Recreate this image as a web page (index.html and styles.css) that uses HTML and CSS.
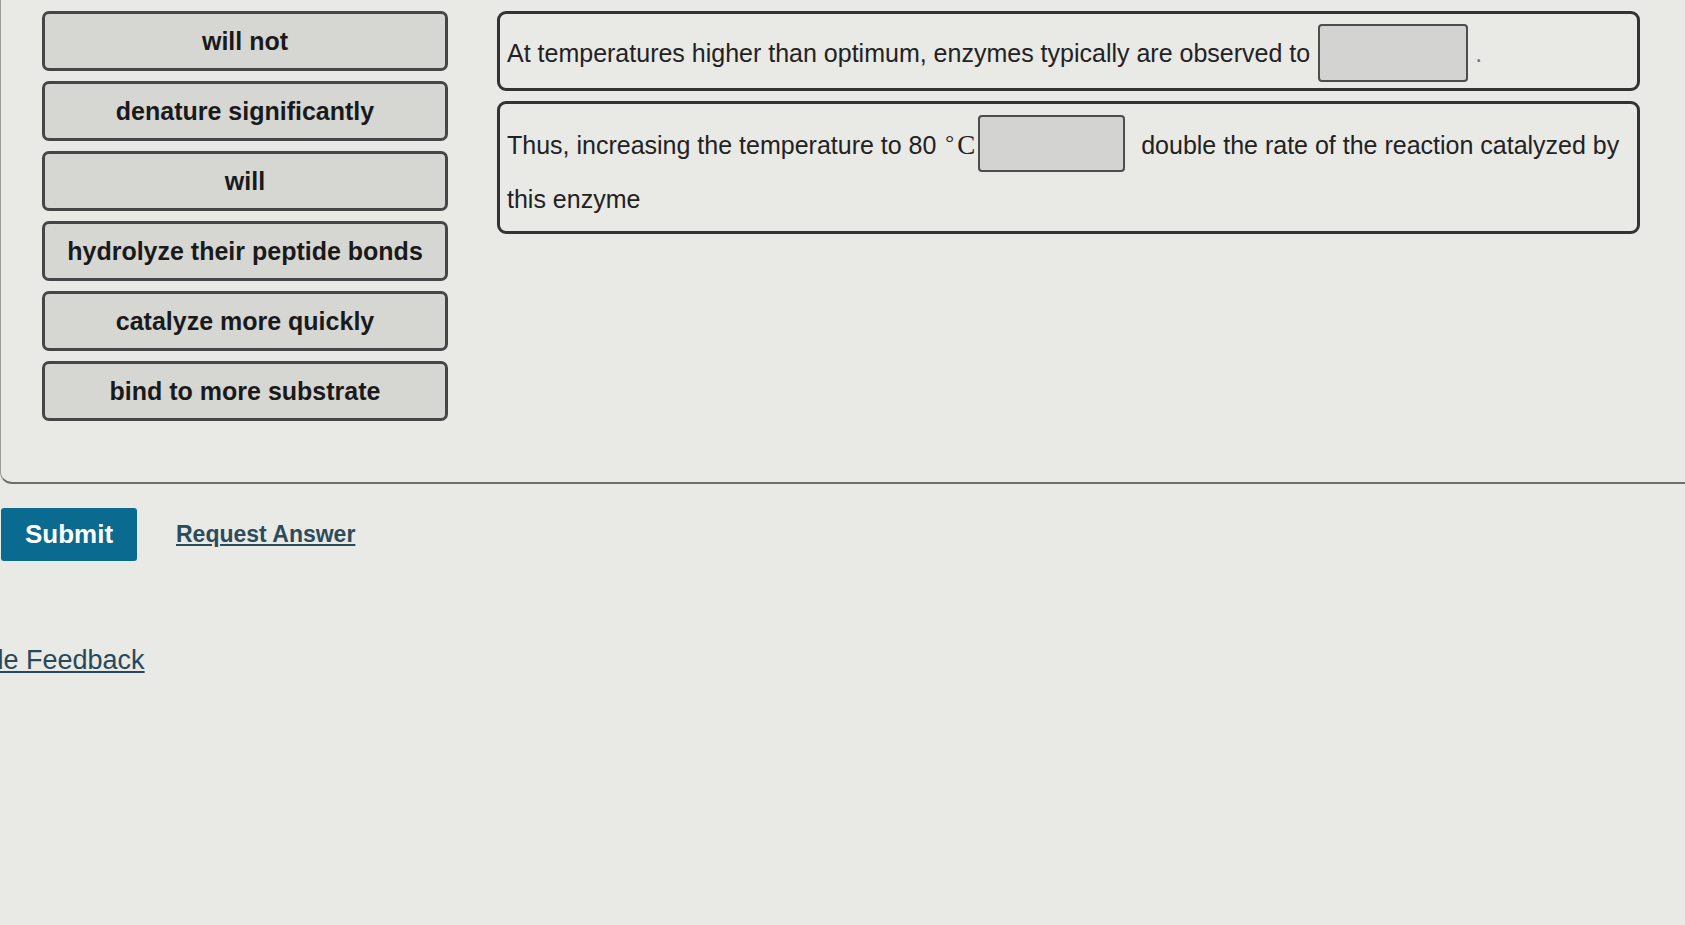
FILE: index.html
```html
<!DOCTYPE html>
<html lang="en">
<head>
    <meta charset="UTF-8">
    <meta name="viewport" content="width=device-width, initial-scale=1.0">
    <title>Enzymes and temperature</title>
    <link rel="stylesheet" href="styles.css">
</head>
<body>
    <div class="question">
        <!-- Answer chips to drag into the blanks -->
        <div class="chips">
            <div class="chip">will not</div>
            <div class="chip">denature significantly</div>
            <div class="chip">will</div>
            <div class="chip">hydrolyze their peptide bonds</div>
            <div class="chip">catalyze more quickly</div>
            <div class="chip">bind to more substrate</div>
        </div>

        <!-- Sentences with drop targets -->
        <div class="sentences">
            <div class="sentence">
                At temperatures higher than optimum, enzymes typically are observed to<span class="blank blank-wide"></span><span class="dot">.</span>
            </div>
            <div class="sentence sentence-tall">
                Thus, increasing the temperature to 80 <span class="unit"><span class="deg">°</span>C</span><span class="blank blank-mid"></span><span class="after">double the rate of the reaction catalyzed by</span><br>this enzyme
            </div>
        </div>
    </div>

    <div class="actions">
        <button class="submit">Submit</button>
        <a href="#" class="request">Request Answer</a>
    </div>

    <a href="#" class="feedback">Provide Feedback</a>
</body>
</html>
```

FILE: styles.css
```css
body {
    margin: 0;
    background-color: #e9e9e6;
    font-family: "Liberation Sans", Arial, sans-serif;
    color: #1e1e1e;
    height: 100vh;
    overflow: hidden;
}

.question {
    display: flex;
    align-items: flex-start;
    height: 484px;
    padding: 11px 0 0 41px;
    box-sizing: border-box;
    border-left: 1px solid #9a9a98;
    border-bottom: 2px solid #6e6e6c;
    border-bottom-left-radius: 12px;
}

.chips {
    display: flex;
    flex-direction: column;
    gap: 10px;
    width: 406px;
}

.chip {
    height: 60px;
    box-sizing: border-box;
    display: flex;
    align-items: center;
    justify-content: center;
    background-color: #d6d6d3;
    border: 3px solid #464646;
    border-radius: 7px;
    font-weight: bold;
    font-size: 25px;
    color: #1a1a1a;
}

.sentences {
    display: flex;
    flex-direction: column;
    gap: 10px;
    margin-left: 49px;
    width: 1143px;
}

.sentence {
    border: 3px solid #333;
    border-radius: 9px;
    padding: 10px 8px 6px 7px;
    font-size: 25px;
    line-height: 53px;
    white-space: nowrap;
    color: #222;
}

.sentence-tall {
    padding-top: 11px;
    padding-bottom: 5px;
}

.blank {
    display: inline-block;
    box-sizing: border-box;
    background-color: #d3d3d1;
    border: 2px solid #4d4d4d;
    border-radius: 4px;
}

.blank-wide {
    width: 150px;
    height: 58px;
    margin-left: 8px;
    vertical-align: -20px;
}

.blank-mid {
    width: 147px;
    height: 57px;
    margin-left: 3px;
    vertical-align: -18px;
}

.dot {
    margin-left: 7px;
    color: #777;
}

.unit {
    font-family: "Liberation Serif", "Times New Roman", serif;
    font-size: 27px;
    margin-left: 2px;
}

.deg {
    font-size: 22px;
    position: relative;
    top: -4px;
    margin-right: 3px;
}

.after {
    margin-left: 16px;
}

.actions {
    display: flex;
    align-items: center;
    gap: 39px;
    margin-top: 24px;
    padding-left: 1px;
}

.submit {
    width: 136px;
    height: 53px;
    background-color: #0b6a90;
    color: #fff;
    border: none;
    border-radius: 3px;
    font-family: "Liberation Sans", Arial, sans-serif;
    font-weight: bold;
    font-size: 26px;
    cursor: pointer;
}

.request {
    color: #2c4b5b;
    font-weight: bold;
    font-size: 23px;
    text-decoration: underline;
}

.feedback {
    display: inline-block;
    margin-top: 84px;
    margin-left: -73px;
    color: #28495a;
    font-size: 27px;
    text-decoration: underline;
}
```
